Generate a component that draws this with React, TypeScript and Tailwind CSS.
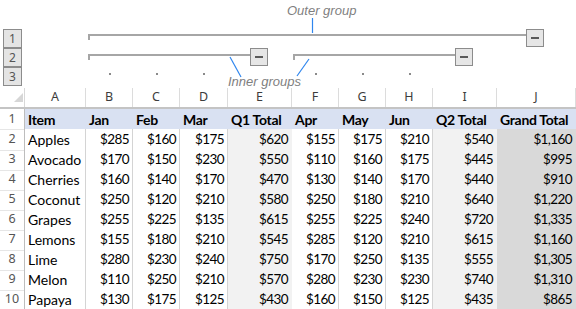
import React from 'react';

const GRID = 'grid grid-cols-[25px_61px_47px_47px_48px_64px_47px_47px_47px_64px_79px]';

const letters = ['A', 'B', 'C', 'D', 'E', 'F', 'G', 'H', 'I', 'J'];
const heads = ['Item', 'Jan', 'Feb', 'Mar', 'Q1 Total', 'Apr', 'May', 'Jun', 'Q2 Total', 'Grand Total'];

const rows: string[][] = [
    ['Apples', '285', '160', '175', '620', '155', '175', '210', '540', '1,160'],
    ['Avocado', '170', '150', '230', '550', '110', '160', '175', '445', '995'],
    ['Cherries', '160', '140', '170', '470', '130', '140', '170', '440', '910'],
    ['Coconut', '250', '120', '210', '580', '250', '180', '210', '640', '1,220'],
    ['Grapes', '255', '225', '135', '615', '255', '225', '240', '720', '1,335'],
    ['Lemons', '155', '180', '210', '545', '285', '120', '210', '615', '1,160'],
    ['Lime', '280', '230', '240', '750', '170', '250', '135', '555', '1,305'],
    ['Melon', '110', '250', '210', '570', '280', '230', '230', '740', '1,310'],
    ['Papaya', '130', '175', '125', '430', '160', '150', '125', '435', '865'],
];

// fill per column index (0 = A)
const cellFill = (i: number) => {
    if (i === 4 || i === 8) return 'bg-[#f2f2f2] border-[#f2f2f2]';
    if (i === 9) return 'bg-[#d9d9d9] border-[#d9d9d9]';
    return 'bg-white border-[#d4d4d4]';
};

const Collapse: React.FC = () => (
    <div className="w-[18px] h-[18px] shrink-0 border border-[#8c8c8c] bg-[#e6e6e6] flex items-center justify-center">
        <div className="w-[8px] h-[2px] bg-[#5a5a5a]" />
    </div>
);

const GroupBar: React.FC<{ className: string; top: string }> = ({ className, top }) => (
    <div className={`flex items-start ${className}`}>
        <div className={`flex-1 h-[6px] border-t-2 border-l-2 border-[#a6a6a6] ${top}`} />
        <Collapse />
    </div>
);

const Dot: React.FC<{ col: string }> = ({ col }) => (
    <div className={`row-start-3 ${col} flex justify-center pt-[6px]`}>
        <div className="w-[2px] h-[2px] bg-[#8a8a8a]" />
    </div>
);

const Outline: React.FC = () => (
    <div className="relative h-[88px]">
        <div className={`${GRID} grid-rows-[19px_19px_19px] pt-[29px]`}>
            <div className="row-start-1 row-span-3 col-start-1 flex flex-col pl-[3px]">
                {['1', '2', '3'].map(n => (
                    <div key={n} className="w-[19px] h-[19px] border border-[#8c8c8c] bg-[#e4e4e4] flex items-center justify-center text-[12px] leading-none text-[#555] font-['Noto_Sans',sans-serif]">
                        {n}
                    </div>
                ))}
            </div>
            <GroupBar className="row-start-1 col-start-3 col-end-12 ml-[2px] mr-[32px]" top="mt-[5px]" />
            <GroupBar className="row-start-2 col-start-3 col-end-7 ml-[2px] mr-[24px]" top="mt-[6px]" />
            <GroupBar className="row-start-2 col-start-7 col-end-11 ml-[1px] mr-[24px]" top="mt-[6px]" />
            <Dot col="col-start-3" />
            <Dot col="col-start-4" />
            <Dot col="col-start-5" />
            <Dot col="col-start-7" />
            <Dot col="col-start-8" />
            <Dot col="col-start-9" />
        </div>

        {/* callouts */}
        <span className="absolute left-[287px] top-[4px] text-[13px] leading-none italic text-[#7f7f7f] font-['Liberation_Sans',Arial,sans-serif]">Outer group</span>
        <span className="absolute left-[228px] top-[75px] text-[13px] leading-none italic text-[#7f7f7f] font-['Liberation_Sans',Arial,sans-serif]">Inner groups</span>
        <svg className="absolute left-0 top-0 pointer-events-none" width="576" height="88">
            <line x1="312.5" y1="18" x2="312.5" y2="33" stroke="#2f86ee" strokeWidth="1.2" />
            <line x1="230" y1="57" x2="241" y2="77" stroke="#2f86ee" strokeWidth="1.2" />
            <line x1="309" y1="59" x2="297" y2="76" stroke="#2f86ee" strokeWidth="1.2" />
        </svg>
    </div>
);

const App: React.FC = () => {
    return (
        <div className="w-[576px] h-[309px] overflow-hidden bg-white font-['Lato',sans-serif] text-black">
            <Outline />

            {/* column letters */}
            <div className={`${GRID} h-[21px] border-b-2 border-[#c4c4c4] font-['Noto_Sans',sans-serif] text-[12.5px] text-[#3c3c3c]`}>
                <div className="relative border-r border-[#d8d8d8]">
                    <svg className="absolute left-0 top-0" width="25" height="19">
                        <polygon points="23,5 23,14 14,14" fill="#d6d6d6" />
                    </svg>
                </div>
                {letters.map(l => (
                    <div key={l} className="border-r border-[#dcdcdc] flex items-center justify-center">{l}</div>
                ))}
            </div>

            {/* row 1 headings */}
            <div className={`${GRID} h-[20px] text-[14px]`}>
                <div className="border-r border-b border-r-[#bdbdbd] border-b-[#e6e6e6] flex items-center justify-center font-['Noto_Sans',sans-serif] text-[12.5px] text-[#555]">1</div>
                {heads.map(h => (
                    <div key={h} className="bg-[#d9e1f2] flex items-center pl-[3px] font-bold tracking-[-0.3px] whitespace-nowrap">{h}</div>
                ))}
            </div>

            {rows.map((r, ri) => (
                <div key={r[0]} className={`${GRID} h-[20px] text-[14px]`}>
                    <div className="border-r border-b border-r-[#bdbdbd] border-b-[#e6e6e6] flex items-center justify-center font-['Noto_Sans',sans-serif] text-[12.5px] text-[#555]">{ri + 2}</div>
                    {r.map((v, ci) => (
                        <div
                            key={ci}
                            className={`border-r border-b flex items-center ${cellFill(ci)} ${ci === 0 ? 'pl-[3px]' : 'justify-end pr-[3px] text-[13.5px] tracking-[-0.6px]'}`}
                        >
                            {ci === 0 ? v : `$${v}`}
                        </div>
                    ))}
                </div>
            ))}
        </div>
    );
};

export default App;
